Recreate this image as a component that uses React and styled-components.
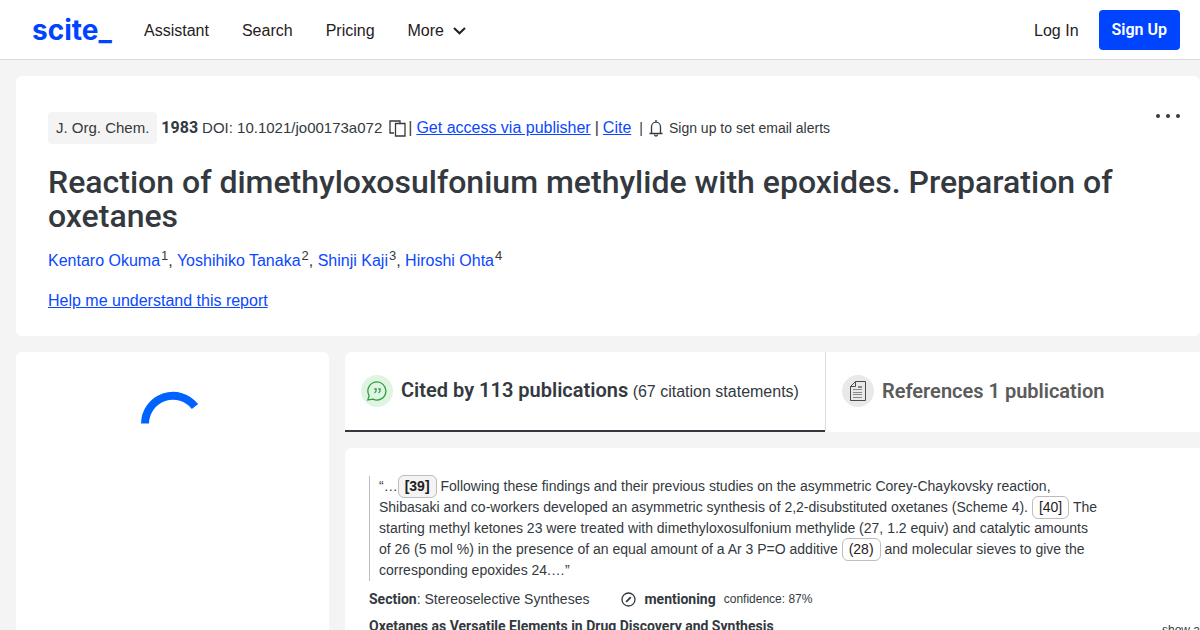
import styled, { createGlobalStyle } from 'styled-components';

const GlobalStyle = createGlobalStyle`
	* {
		box-sizing: border-box;
	}
	body {
		margin: 0;
		background: #f4f4f4;
		color: #33393e;
		font-family: 'Liberation Sans', Arial, sans-serif;
		font-size: 16px;
		line-height: 24px;
	}
	a {
		color: #0a47ff;
	}
	b {
		font-family: Roboto, sans-serif;
	}
	button {
		padding: 0;
		border: 0;
		background: none;
		color: inherit;
		font: inherit;
		cursor: pointer;
	}
`;

const Page = styled.div`
	max-height: 100vh;
	overflow: hidden;
`;

const Header = styled.header`
	display: flex;
	align-items: center;
	height: 60px;
	padding: 0 20px 0 32px;
	background: #fff;
	border-bottom: 1px solid #d8d8d8;
	color: #1f2021;
`;

const Logo = styled.a`
	width: 80px;
	color: #0044ff;
	font-family: Inter, sans-serif;
	font-size: 28px;
	font-weight: 700;
	line-height: 30px;
	text-decoration: none;
`;

const Nav = styled.nav`
	display: flex;
	flex: 1;
	gap: 33px;
	margin-left: 32px;
`;

const NavLink = styled.a`
	padding-top: 2px;
	color: #1f2021;
	text-decoration: none;
`;

const MoreButton = styled.button`
	display: flex;
	align-items: center;
	gap: 9px;
	padding-top: 2px;
`;

const SignUpButton = styled.button`
	height: 40px;
	margin-left: 20px;
	padding: 0 13px;
	border-radius: 4px;
	background: #0044ff;
	color: #fff;
	font-family: Roboto, sans-serif;
	font-weight: 600;
`;

const Main = styled.main`
	display: flex;
	flex-direction: column;
	gap: 16px;
	padding: 16px 0 0 16px;
`;

const PaperCard = styled.section`
	padding: 36px 20px 23px 32px;
	border-radius: 6px;
	background: #fff;
`;

const MetaRow = styled.div`
	display: flex;
	align-items: center;
	gap: 4px;
	white-space: nowrap;
`;

const Journal = styled.span`
	padding: 4px 8px;
	border-radius: 4px;
	background: #f4f4f4;
	font-size: 15px;
`;

const Doi = styled.span`
	font-size: 15px;
`;

const CopyButton = styled.button`
	display: flex;
	margin: 0 -2px 0 3px;
`;

const AlertButton = styled.button`
	display: flex;
	align-items: center;
	gap: 6px;
	margin-left: 4px;
	font-size: 14px;
`;

const MenuButton = styled.button`
	display: flex;
	align-self: flex-start;
	margin-left: auto;
`;

const Title = styled.h1`
	margin: 21px 0 16px;
	font-family: Roboto, sans-serif;
	font-size: 32px;
	font-weight: 500;
	line-height: 34px;
`;

const Authors = styled.div`
	margin-bottom: 16px;

	a {
		text-decoration: none;
	}
	sup {
		padding-left: 1px;
		font-size: 13px;
		line-height: 0;
	}
`;

const Columns = styled.div`
	display: grid;
	grid-template-columns: 313px 1fr;
	gap: 16px;
`;

const Sidebar = styled.aside`
	display: flex;
	justify-content: center;
	min-height: 100vh;
	padding-top: 38px;
	border-radius: 6px;
	background: #fff;
`;

const Results = styled.div`
	min-width: 0;
`;

const Tabs = styled.div`
	display: flex;
	height: 80px;
	margin-bottom: 16px;
	border-radius: 6px 0 0 0;
	background: #fff;
`;

const Tab = styled.button`
	display: flex;
	align-items: center;
	gap: 8px;
	width: 480px;
	padding: 0 16px;
	border-bottom: 2px solid ${(props) => (props.$active ? '#33393e' : 'transparent')};
	border-left: ${(props) => (props.$active ? '0' : '1px solid #dcdcdc')};
	color: ${(props) => (props.$active ? '#33393e' : '#5b5b5b')};
	flex-shrink: ${(props) => (props.$active ? '0' : '1')};
	white-space: nowrap;
`;

const TabIcon = styled.span`
	display: flex;
	align-items: center;
	justify-content: center;
	width: 32px;
	height: 32px;
	border-radius: 50%;
	background: ${(props) => props.$color};
`;

const TabTitle = styled.span`
	font-family: Roboto, sans-serif;
	font-size: 20px;
	font-weight: 600;
`;

const Statements = styled.div`
	padding: 28px 0 24px 24px;
	border-radius: 6px 0 0 0;
	background: #fff;
	font-size: 14px;
	line-height: 21px;
`;

const Quote = styled.blockquote`
	max-width: 732px;
	margin: 0 0 8px;
	padding-left: 9px;
	border-left: 1px solid #bdbdbd;
`;

const Reference = styled.a`
	padding: 2px 6px 3px;
	border: 1px solid #bdbdbd;
	border-radius: 6px;
	background: ${(props) => (props.$current ? '#f4f4f4' : '#fff')};
	color: #1f2021;
	font-weight: ${(props) => (props.$current ? 'bold' : 'normal')};
	text-decoration: none;
`;

const Details = styled.div`
	display: flex;
	align-items: center;
	margin-bottom: 6px;
`;

const Kind = styled.span`
	display: flex;
	align-items: center;
	gap: 8px;
	margin-left: 32px;
`;

const Confidence = styled.span`
	font-size: 12px;
`;

const SourceRow = styled.div`
	display: flex;
	justify-content: space-between;
	white-space: nowrap;
`;

const AbstractButton = styled.button`
	width: 38px;
	padding-top: 4px;
	font-size: 12px;
	text-align: left;
`;

const authors = ['Kentaro Okuma', 'Yoshihiko Tanaka', 'Shinji Kaji', 'Hiroshi Ohta'];

function ChevronIcon() {
	return (
		<svg width='13' height='8' viewBox='0 0 13 8' fill='none' stroke='#1f2021' strokeWidth='2'>
			<path d='M1 1l5.5 5.3L12 1' />
		</svg>
	);
}

function CopyIcon() {
	return (
		<svg width='17' height='17' viewBox='0 0 17 17' fill='none' stroke='#33393e' strokeWidth='1.3'>
			<path d='M5 13H1V1h10v2' />
			<path d='M6.5 3.5h9.5V16H6.5z' />
		</svg>
	);
}

function BellIcon() {
	return (
		<svg width='14' height='17' viewBox='0 0 14 17' fill='none' stroke='#33393e' strokeWidth='1.3'>
			<path d='M.5 13.5h13M2.5 13.5V7a4.5 4.8 0 0 1 9 0v6.5M7 2V0' />
			<path d='M5.5 14.5a1.5 1.5 0 0 0 3 0' />
		</svg>
	);
}

function DotsIcon() {
	return (
		<svg width='24' height='8' viewBox='0 0 24 8' fill='#33393e'>
			<circle cx='2' cy='4' r='2' />
			<circle cx='12' cy='4' r='2' />
			<circle cx='22' cy='4' r='2' />
		</svg>
	);
}

function Spinner() {
	return (
		<svg width='64' height='64' viewBox='0 0 64 64' fill='none' stroke='#0062ff' strokeWidth='8'>
			<path d='M4 33.5A28 28 0 0 1 54 16.5' />
		</svg>
	);
}

function QuoteIcon() {
	return (
		<svg width='20' height='20' viewBox='0 0 20 20' fill='none' stroke='#2f9e44' strokeWidth='1.3'>
			<path d='M2.1 14.5A9 9 0 1 1 6 18.1L.8 19z' />
			<path d='M7.3 8h1.8v1.2q0 2-1.6 2.8M11.3 8h1.8v1.2q0 2-1.6 2.8' />
		</svg>
	);
}

function DocumentIcon() {
	return (
		<svg width='16' height='20' viewBox='0 0 16 20' fill='none' stroke='#4a4a4a'>
			<path d='M5.5.5h10v19H.5v-14zV5.5h-5' />
			<path d='M8 5.5h4M8 6.5h4M3 8.5h9M3 11.5h9M3 13.5h9M3 16.5h9' stroke='#888' />
		</svg>
	);
}

function MentionIcon() {
	return (
		<svg width='15' height='15' viewBox='0 0 15 15' fill='none' stroke='#33393e' strokeWidth='1.3'>
			<circle cx='7.5' cy='7.5' r='6.5' />
			<path d='M5.2 9.8l4.6-4.6' strokeWidth='1.8' />
		</svg>
	);
}

export default function App() {
	return (
		<Page>
			<GlobalStyle />
			<Header>
				<Logo href='#'>scite_</Logo>
				<Nav>
					<NavLink href='#'>Assistant</NavLink>
					<NavLink href='#'>Search</NavLink>
					<NavLink href='#'>Pricing</NavLink>
					<MoreButton type='button'>
						More
						<ChevronIcon />
					</MoreButton>
				</Nav>
				<NavLink href='#'>Log In</NavLink>
				<SignUpButton type='button'>Sign Up</SignUpButton>
			</Header>

			<Main>
				<PaperCard>
					<MetaRow>
						<Journal>J. Org. Chem.</Journal>
						<b>1983</b>
						<Doi>DOI: 10.1021/jo00173a072</Doi>
						<CopyButton type='button' aria-label='Copy DOI'>
							<CopyIcon />
						</CopyButton>
						<span>|</span>
						<a href='#'>Get access via publisher</a>
						<span>|</span>
						<a href='#'>Cite</a>
						<AlertButton type='button'>
							<span>|</span>
							<BellIcon />
							Sign up to set email alerts
						</AlertButton>
						<MenuButton type='button' aria-label='More options'>
							<DotsIcon />
						</MenuButton>
					</MetaRow>
					<Title>
						Reaction of dimethyloxosulfonium methylide with epoxides. Preparation of oxetanes
					</Title>
					<Authors>
						{authors.map((author, index) => (
							<span key={author}>
								{index > 0 && ', '}
								<a href='#'>{author}</a>
								<sup>{index + 1}</sup>
							</span>
						))}
					</Authors>
					<a href='#'>Help me understand this report</a>
				</PaperCard>

				<Columns>
					<Sidebar>
						<Spinner />
					</Sidebar>
					<Results>
						<Tabs>
							<Tab type='button' $active>
								<TabIcon $color='#dff5e1'>
									<QuoteIcon />
								</TabIcon>
								<span>
									<TabTitle>Cited by 113 publications</TabTitle> (67 citation statements)
								</span>
							</Tab>
							<Tab type='button'>
								<TabIcon $color='#e9e9e9'>
									<DocumentIcon />
								</TabIcon>
								<TabTitle>References 1 publication</TabTitle>
							</Tab>
						</Tabs>
						<Statements>
							<Quote>
								“…<Reference href='#' $current>[39]</Reference> Following these findings and their
								previous studies on the asymmetric Corey-Chaykovsky reaction, Shibasaki and co-workers
								developed an asymmetric synthesis of 2,2-disubstituted oxetanes (Scheme 4).{' '}
								<Reference href='#'>[40]</Reference> The starting methyl ketones 23 were treated with
								dimethyloxosulfonium methylide (27, 1.2 equiv) and catalytic amounts of 26 (5 mol %) in
								the presence of an equal amount of a Ar 3 P=O additive{' '}
								<Reference href='#'>(28)</Reference> and molecular sieves to give the corresponding
								epoxides 24.…”
							</Quote>
							<Details>
								<span>
									<b>Section</b>: Stereoselective Syntheses
								</span>
								<Kind>
									<MentionIcon />
									<b>mentioning</b>
									<Confidence>confidence: 87%</Confidence>
								</Kind>
							</Details>
							<SourceRow>
								<b>Oxetanes as Versatile Elements in Drug Discovery and Synthesis</b>
								<AbstractButton type='button'>show abstract</AbstractButton>
							</SourceRow>
						</Statements>
					</Results>
				</Columns>
			</Main>
		</Page>
	);
}
